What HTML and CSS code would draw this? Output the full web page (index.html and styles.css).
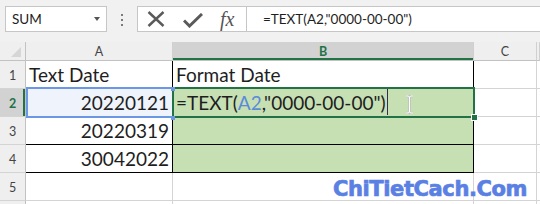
FILE: index.html
```html
<!DOCTYPE html>
<html>
<head>
<meta charset="utf-8">
<link rel="stylesheet" href="styles.css">
</head>
<body>
<div class="toolbar">
  <div class="namebox"><span class="nb-text">SUM</span><span class="dd"></span></div>
  <div class="dots"><i></i><i></i><i></i></div>
  <div class="fbox">
    <div class="icons">
      <svg class="ic-x" width="18" height="16" viewBox="0 0 18 16"><path d="M1.5 1 L16.5 15 M16.5 1 L1.5 15" stroke="#5a5a5a" stroke-width="2.4" fill="none"/></svg>
      <svg class="ic-ok" width="20" height="15" viewBox="0 0 20 15"><path d="M1 7.5 L6.5 13 L19 1" stroke="#5a5a5a" stroke-width="3" fill="none"/></svg>
      <span class="fx">fx</span>
    </div>
    <div class="ftext">=TEXT(A2,"0000-00-00")</div>
  </div>
</div>
<div class="sheet">
  <div class="grid">
    <div class="hd corner"><span class="tri"></span></div>
    <div class="hd ch">A</div>
    <div class="hd ch selc">B</div>
    <div class="hd ch">C</div>
    <div class="hd ch"></div>

    <div class="rh">1</div>
    <div class="c tb">Text Date</div>
    <div class="c tb">Format Date</div>
    <div class="c"></div>
    <div class="c"></div>

    <div class="rh selr">2</div>
    <div class="c tb num ref">20220121</div>
    <div class="c tb green edit"><span>=TEXT(</span><span class="refc">A2</span><span>,"0000-00-00")</span><span class="caret"></span></div>
    <div class="c"></div>
    <div class="c"></div>

    <div class="rh">3</div>
    <div class="c tb num">20220319</div>
    <div class="c tb green"></div>
    <div class="c"></div>
    <div class="c"></div>

    <div class="rh">4</div>
    <div class="c tb num">30042022</div>
    <div class="c tb green"></div>
    <div class="c"></div>
    <div class="c"></div>

    <div class="rh">5</div>
    <div class="c"></div>
    <div class="c"></div>
    <div class="c"></div>
    <div class="c"></div>

    <div class="rh"></div>
    <div class="c"></div>
    <div class="c"></div>
    <div class="c"></div>
    <div class="c"></div>
  </div>
  <div class="refbox"></div>
  <div class="selbox"></div>
  <div class="hdl h1"></div>
  <div class="hdl h2"></div>
  <div class="fill"></div>
  <svg class="ibeam" width="9" height="19" viewBox="0 0 9 19"><path d="M1 1 H3 Q4.5 1 4.5 3 V16 Q4.5 18 3 18 H1 M8 1 H6 Q4.5 1 4.5 3 M4.5 16 Q4.5 18 6 18 H8" stroke="#bdbdbd" stroke-width="2.4" fill="none"/><path d="M1 1 H3 Q4.5 1 4.5 3 V16 Q4.5 18 3 18 H1 M8 1 H6 Q4.5 1 4.5 3 M4.5 16 Q4.5 18 6 18 H8" stroke="#ffffff" stroke-width="1" fill="none"/></svg>
  <div class="wm">ChiTietCach.Com</div>
</div>
</body>
</html>
```
FILE: styles.css
```css
html, body {
  margin: 0;
  padding: 0;
}
body {
  width: 540px;
  height: 204px;
  overflow: hidden;
  background: #ffffff;
  font-family: Lato, "Open Sans", sans-serif;
  color: #1e1e1e;
}
.toolbar {
  height: 42px;
  background: #f1f1f1;
  display: flex;
  align-items: flex-start;
  padding-top: 6px;
  box-sizing: border-box;
  overflow: hidden;
}
.namebox {
  flex: none;
  margin-left: 5px;
  width: 102px;
  height: 26px;
  box-sizing: border-box;
  border: 1px solid #c6c6c6;
  background: #fff;
  display: flex;
  align-items: center;
  padding-left: 6px;
  font-size: 13.5px;
  color: #222;
}
.dd {
  margin-left: auto;
  margin-right: 6px;
  width: 0;
  height: 0;
  border-left: 3.5px solid transparent;
  border-right: 3.5px solid transparent;
  border-top: 4px solid #555;
}
.dots {
  flex: none;
  margin-left: 14px;
  margin-top: 8px;
  display: flex;
  flex-direction: column;
  gap: 3px;
}
.dots i {
  display: block;
  width: 2px;
  height: 2px;
  background: #7a7a7a;
}
.fbox {
  flex: none;
  margin-left: 14px;
  width: 420px;
  height: 26px;
  box-sizing: border-box;
  border: 1px solid #c6c6c6;
  background: #fff;
  display: flex;
}
.icons {
  flex: none;
  width: 108px;
  display: flex;
  align-items: center;
}
.ic-x { margin-left: 9px; }
.ic-ok { margin-left: 18px; margin-top: 2px; }
.fx {
  margin-left: 17px;
  font-family: "Liberation Serif", serif;
  font-style: italic;
  font-size: 20px;
  color: #555;
  line-height: 20px;
}
.ftext {
  border-left: 1px solid #c6c6c6;
  padding-left: 16px;
  display: flex;
  align-items: center;
  font-size: 13.5px;
  color: #1e1e1e;
  white-space: nowrap;
}
.sheet {
  position: relative;
  height: 162px;
  overflow: hidden;
}
.grid {
  display: grid;
  grid-template-columns: 26px 147px 301px 63px 3px;
  grid-template-rows: 19px repeat(5, 28px) 3px;
}
.grid > div {
  box-sizing: border-box;
  border-right: 1px solid #d4d4d4;
  border-bottom: 1px solid #d4d4d4;
}
.hd {
  background: #efefef;
  border-bottom-color: #c2c2c2 !important;
  border-right-color: #d0d0d0 !important;
  font-size: 12.5px;
  color: #444;
  display: flex;
  align-items: center;
  justify-content: center;
}
.corner {
  position: relative;
  border-right-color: #c2c2c2 !important;
}
.tri {
  position: absolute;
  right: 4px;
  bottom: 3px;
  width: 0;
  height: 0;
  border-left: 10px solid transparent;
  border-bottom: 10px solid #d6d6d6;
}
.selc {
  background: #d2d2d2;
  color: #217346;
  font-weight: bold;
  box-shadow: inset 0 -2px 0 #217346;
}
.rh {
  background: #efefef;
  border-right-color: #c2c2c2 !important;
  font-size: 12.5px;
  color: #444;
  display: flex;
  align-items: flex-end;
  justify-content: center;
  padding-bottom: 5px;
}
.selr {
  background: #d2d2d2;
  color: #217346;
  font-weight: bold;
  box-shadow: inset -2px 0 0 #217346;
}
.c {
  font-size: 19px;
  line-height: 19px;
  display: flex;
  align-items: flex-end;
  padding: 0 3px 4px 3px;
  white-space: nowrap;
}
.tb {
  border-right-color: #000 !important;
  border-bottom-color: #000 !important;
}
.num {
  justify-content: flex-end;
  padding-right: 3px;
}
.ref {
  background: #eef3fc;
}
.green {
  background: #c6e0b4;
}
.edit {
  padding-left: 3px;
  position: relative;
}
.refc {
  color: #5b8ad8;
}
.caret {
  display: block;
  width: 1px;
  height: 26px;
  background: #3a2a5c;
  margin-left: 1px;
  margin-bottom: -3px;
}
.refbox {
  position: absolute;
  left: 26px;
  top: 45px;
  width: 148px;
  height: 31px;
  box-sizing: border-box;
  border: 2px solid #6b97e4;
}
.selbox {
  position: absolute;
  left: 172px;
  top: 45px;
  width: 303px;
  height: 31px;
  box-sizing: border-box;
  border: 2px solid #217346;
}
.hdl {
  position: absolute;
  width: 4px;
  height: 4px;
  background: #6b97e4;
}
.h1 { left: 171px; top: 45px; }
.h2 { left: 171px; top: 74px; }
.fill {
  position: absolute;
  left: 471px;
  top: 72px;
  width: 5px;
  height: 5px;
  background: #217346;
  border: 1px solid #fff;
}
.ibeam {
  position: absolute;
  left: 405px;
  top: 53px;
}
.wm {
  position: absolute;
  left: 333px;
  top: 137px;
  font-family: "DejaVu Sans", sans-serif;
  font-weight: bold;
  font-size: 21px;
  line-height: 21px;
  letter-spacing: -0.4px;
  color: #5a80e4;
  -webkit-text-stroke: 0.7px #5a80e4;
  white-space: nowrap;
}
```
